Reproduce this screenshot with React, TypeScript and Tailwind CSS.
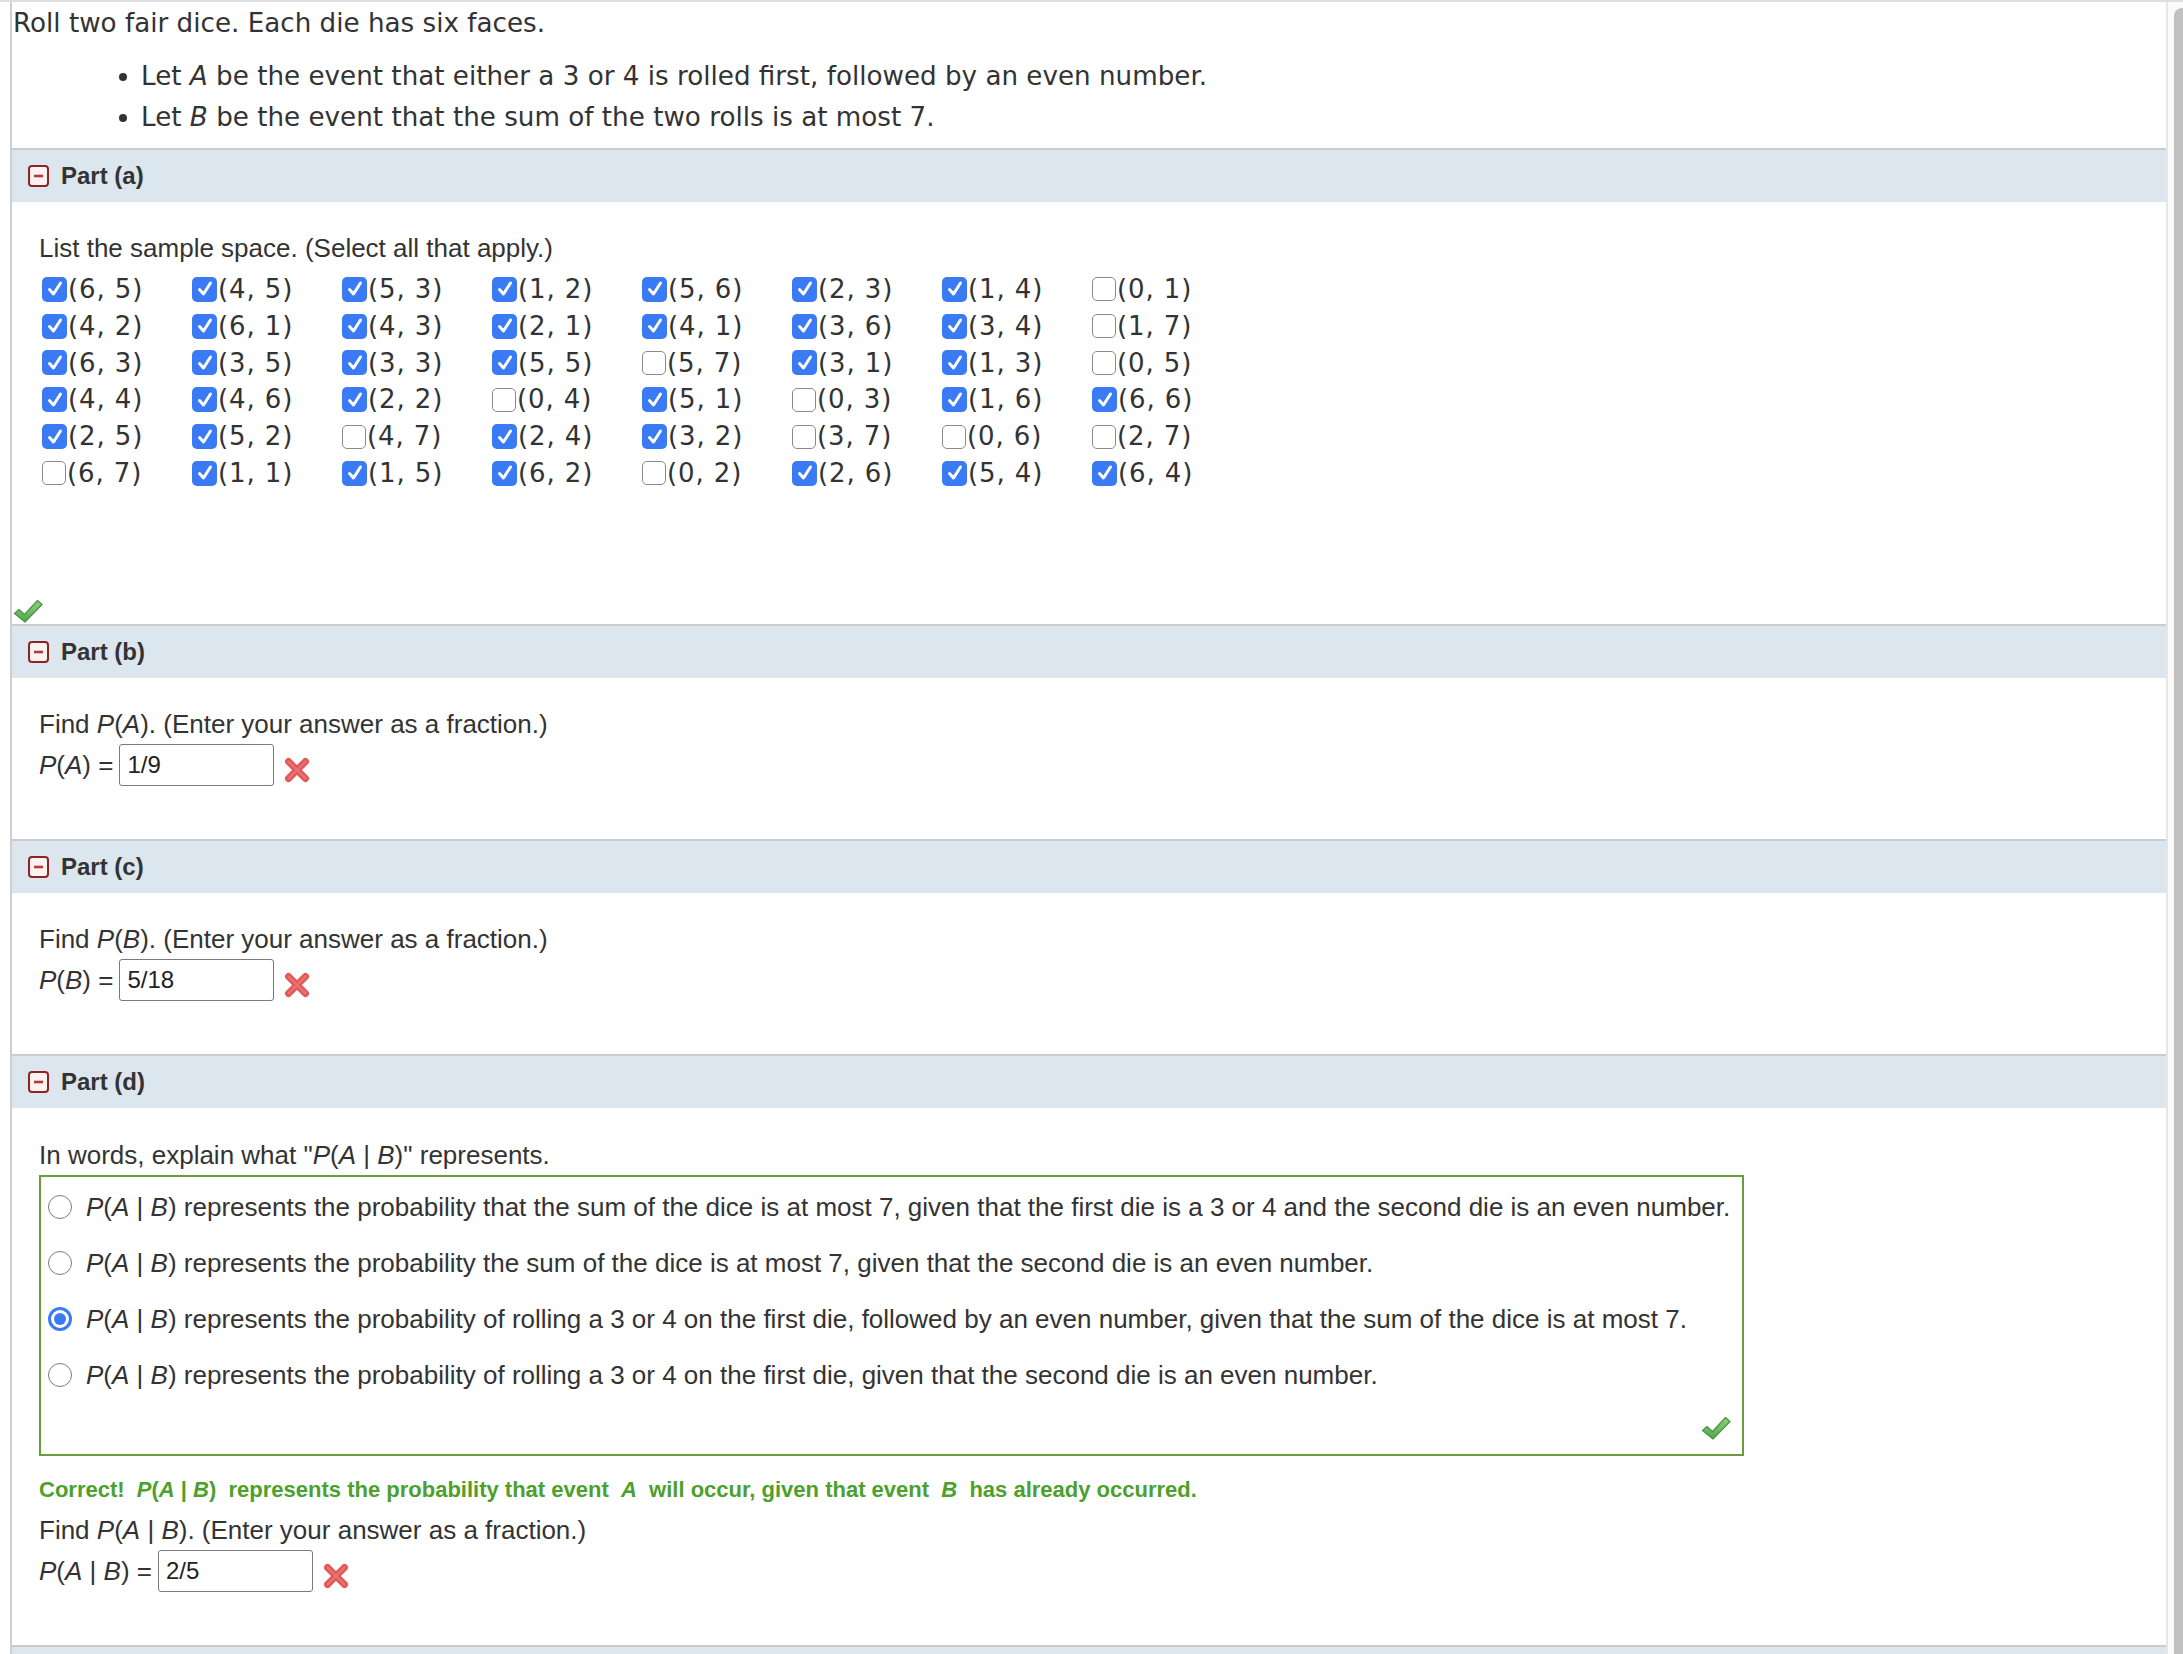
import React from 'react';

const verdana = "font-['DejaVu_Sans',Verdana,sans-serif]";
const arial = "font-['Liberation_Sans',Arial,sans-serif]";

type Cell = [string, boolean];

const GRID: Cell[][] = [
  [['(6, 5)', true], ['(4, 5)', true], ['(5, 3)', true], ['(1, 2)', true], ['(5, 6)', true], ['(2, 3)', true], ['(1, 4)', true], ['(0, 1)', false]],
  [['(4, 2)', true], ['(6, 1)', true], ['(4, 3)', true], ['(2, 1)', true], ['(4, 1)', true], ['(3, 6)', true], ['(3, 4)', true], ['(1, 7)', false]],
  [['(6, 3)', true], ['(3, 5)', true], ['(3, 3)', true], ['(5, 5)', true], ['(5, 7)', false], ['(3, 1)', true], ['(1, 3)', true], ['(0, 5)', false]],
  [['(4, 4)', true], ['(4, 6)', true], ['(2, 2)', true], ['(0, 4)', false], ['(5, 1)', true], ['(0, 3)', false], ['(1, 6)', true], ['(6, 6)', true]],
  [['(2, 5)', true], ['(5, 2)', true], ['(4, 7)', false], ['(2, 4)', true], ['(3, 2)', true], ['(3, 7)', false], ['(0, 6)', false], ['(2, 7)', false]],
  [['(6, 7)', false], ['(1, 1)', true], ['(1, 5)', true], ['(6, 2)', true], ['(0, 2)', false], ['(2, 6)', true], ['(5, 4)', true], ['(6, 4)', true]],
];

const OPTIONS = [
  'represents the probability that the sum of the dice is at most 7, given that the first die is a 3 or 4 and the second die is an even number.',
  'represents the probability the sum of the dice is at most 7, given that the second die is an even number.',
  'represents the probability of rolling a 3 or 4 on the first die, followed by an even number, given that the sum of the dice is at most 7.',
  'represents the probability of rolling a 3 or 4 on the first die, given that the second die is an even number.',
];

function MinusBox() {
  return (
    <svg width="21" height="22" viewBox="0 0 21 22">
      <rect x="1" y="1" width="19" height="20" rx="3" fill="#fbf2f2" stroke="#8e2424" strokeWidth="2" />
      <rect x="6" y="9.7" width="9" height="2.6" fill="#b73838" />
    </svg>
  );
}

function GreenCheck() {
  return (
    <svg width="32" height="26" viewBox="0 0 32 26">
      <defs>
        <linearGradient id="gc" x1="0" y1="0" x2="0" y2="1">
          <stop offset="0" stopColor="#8fd07f" />
          <stop offset="1" stopColor="#4fa848" />
        </linearGradient>
      </defs>
      <path
        d="M2.5 15.5 L7 11.5 L12.5 16.5 L25.5 2.5 L30 6.5 L13 24 Z"
        fill="url(#gc)"
        stroke="#4a9444"
        strokeWidth="1.2"
        strokeLinejoin="round"
      />
    </svg>
  );
}

function RedX() {
  return (
    <svg width="28" height="28" viewBox="0 0 28 28">
      <path d="M5.5 5.5 L22.5 22.5 M22.5 5.5 L5.5 22.5" stroke="#e05a5a" strokeWidth="7" strokeLinecap="round" />
      <path d="M5.5 5.5 L22.5 22.5 M22.5 5.5 L5.5 22.5" stroke="#ee8c8c" strokeWidth="2" strokeLinecap="round" opacity="0.5" />
    </svg>
  );
}

function Checkbox({ checked }: { checked: boolean }) {
  if (!checked) {
    return <span className="w-[24px] h-[24px] rounded-[5px] border-[1.5px] border-[#8a8a8a] bg-white shrink-0" />;
  }
  return (
    <span className="w-[25px] h-[25px] rounded-[5px] bg-[#3a7af5] flex items-center justify-center shrink-0">
      <svg width="18" height="18" viewBox="0 0 18 18">
        <path d="M3.5 9.5 L7.5 14 L14.5 3" fill="none" stroke="white" strokeWidth="3" strokeLinecap="round" strokeLinejoin="round" />
      </svg>
    </span>
  );
}

function Radio({ selected }: { selected: boolean }) {
  if (selected) {
    return (
      <span className="w-[24px] h-[24px] rounded-full border-[3px] border-[#3a7af5] bg-white flex items-center justify-center shrink-0">
        <span className="w-[12px] h-[12px] rounded-full bg-[#3a7af5]" />
      </span>
    );
  }
  return <span className="w-[24px] h-[24px] rounded-full border-[1.5px] border-[#7a7a7a] bg-white shrink-0" />;
}

function PAB() {
  return (
    <span>
      <i>P</i>(<i>A</i> | <i>B</i>)
    </span>
  );
}

function PartHeader({ label }: { label: string }) {
  return (
    <div className="h-[54px] border-t-2 border-[#cccccc] bg-[#dce6ef] flex items-center pl-[16px]">
      <MinusBox />
      <span className={`${arial} ml-[12px] text-[24px] font-bold text-[#333333]`}>{label}</span>
    </div>
  );
}

function AnswerRow({ label, value }: { label: React.ReactNode; value: string }) {
  return (
    <div className="mt-[2px] flex items-center h-[42px]">
      <span className="text-[26px] mr-[6px]">{label}</span>
      <div className="w-[155px] h-[42px] border-[1.5px] border-[#7a7a7a] rounded-[3px] bg-white flex items-center pl-[7px] text-[24px] text-[#222222]">
        {value}
      </div>
      <span className="ml-[9px] mt-[10px]">
        <RedX />
      </span>
    </div>
  );
}

export default function App() {
  return (
    <div className="w-[2183px] h-[1654px] bg-white overflow-hidden flex flex-col text-[#333333]">
      <div className="h-[2px] bg-[#dedede] shrink-0" />
      <div className="flex flex-1 min-h-0">
        <div className="w-[10px] shrink-0" />
        <div className="w-[2158px] shrink-0 border-l-2 border-r-2 border-l-[#cfcfcf] border-r-[#e6e6e6] flex flex-col">
          {/* intro */}
          <div className={`${verdana} h-[146px] pt-[3px] text-[26.2px]`}>
            <p className="leading-[36px] pl-[1px]">Roll two fair dice. Each die has six faces.</p>
            <div className="mt-[15px]">
              <div className="flex items-center leading-[41px]">
                <span className="ml-[107px] w-[8px] h-[8px] rounded-full bg-[#333333]" />
                <span className="ml-[14px]">
                  Let <i>A</i> be the event that either a 3 or 4 is rolled first, followed by an even number.
                </span>
              </div>
              <div className="flex items-center leading-[41px]">
                <span className="ml-[107px] w-[8px] h-[8px] rounded-full bg-[#333333]" />
                <span className="ml-[14px]">
                  Let <i>B</i> be the event that the sum of the two rolls is at most 7.
                </span>
              </div>
            </div>
          </div>

          <PartHeader label="Part (a)" />
          <div className={`${arial} h-[422px] pt-[28px] pl-[27px]`}>
            <p className="text-[26px] leading-[36px]">List the sample space. (Select all that apply.)</p>
            <div className="mt-[5px] ml-[3px] grid grid-cols-[repeat(8,150px)]">
              {GRID.flat().map(([label, checked], i) => (
                <div key={i} className="h-[36.8px] flex items-center">
                  <Checkbox checked={checked} />
                  <span className={`${verdana} text-[26px] tracking-[0.9px] ml-[1px]`}>{label}</span>
                </div>
              ))}
            </div>
            <div className="mt-[106px] -ml-[27px] h-[25px]">
              <GreenCheck />
            </div>
          </div>

          <PartHeader label="Part (b)" />
          <div className={`${arial} h-[161px] pt-[28px] pl-[27px]`}>
            <p className="text-[26px] leading-[36px]">
              Find <i>P</i>(<i>A</i>). (Enter your answer as a fraction.)
            </p>
            <AnswerRow
              label={
                <>
                  <i>P</i>(<i>A</i>) =
                </>
              }
              value="1/9"
            />
          </div>

          <PartHeader label="Part (c)" />
          <div className={`${arial} h-[161px] pt-[28px] pl-[27px]`}>
            <p className="text-[26px] leading-[36px]">
              Find <i>P</i>(<i>B</i>). (Enter your answer as a fraction.)
            </p>
            <AnswerRow
              label={
                <>
                  <i>P</i>(<i>B</i>) =
                </>
              }
              value="5/18"
            />
          </div>

          <PartHeader label="Part (d)" />
          <div className={`${arial} h-[537px] pt-[29px] pl-[27px]`}>
            <p className="text-[26px] leading-[36px]">
              In words, explain what "<PAB />" represents.
            </p>
            <div className="mt-[2px] w-[1705px] border-2 border-[#6a9e3c] pl-[7px] pt-[2px]">
              {OPTIONS.map((text, i) => (
                <div key={i} className="h-[56px] flex items-center">
                  <Radio selected={i === 2} />
                  <span className="ml-[14px] text-[26px] text-[#333333]">
                    <PAB /> {text}
                  </span>
                </div>
              ))}
              <div className="flex justify-end pr-[10px] pt-[12px] pb-[13px]">
                <GreenCheck />
              </div>
            </div>
            <p className="mt-[19px] leading-[30px] text-[22px] font-bold text-[#4da02c] whitespace-pre">
              {'Correct!  '}
              <PAB />
              {'  represents the probability that event  '}
              <i>A</i>
              {'  will occur, given that event  '}
              <i>B</i>
              {'  has already occurred.'}
            </p>
            <p className="mt-[7px] text-[26px] leading-[36px]">
              Find <PAB />. (Enter your answer as a fraction.)
            </p>
            <AnswerRow
              label={
                <>
                  <PAB /> =
                </>
              }
              value="2/5"
            />
          </div>

          <div className="border-t-2 border-[#cccccc] bg-[#dce6ef] flex-1" />
        </div>
        <div className="w-[6px] shrink-0 bg-[#fafafa]" />
        <div className="w-[9px] shrink-0 bg-[#fafafa] pt-[6px]">
          <div className="h-full bg-[#c1c1c1] rounded-tl-[8px]" />
        </div>
      </div>
    </div>
  );
}
